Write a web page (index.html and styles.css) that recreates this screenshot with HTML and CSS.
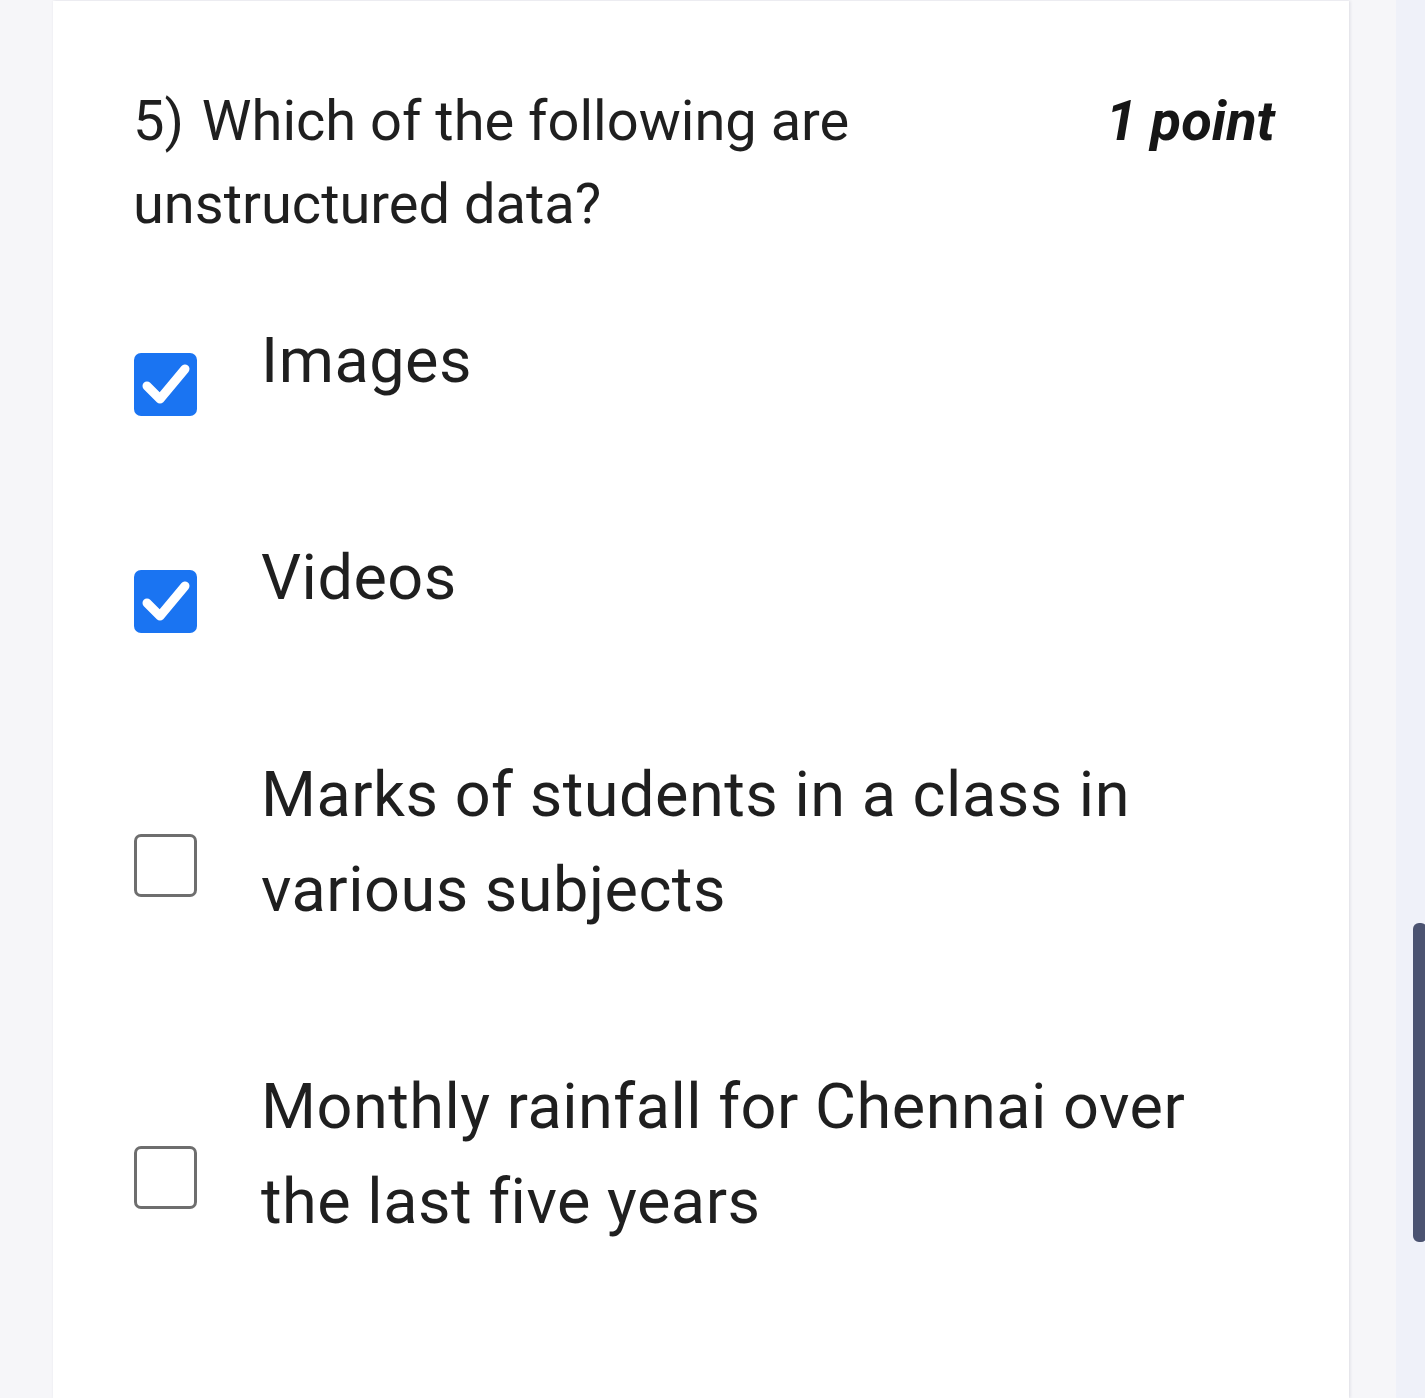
FILE: index.html
```html
<!DOCTYPE html>
<html lang="en">
<head>
    <meta charset="UTF-8">
    <meta name="viewport" content="width=device-width, initial-scale=1.0">
    <title>Quiz Question</title>
    <link rel="stylesheet" href="styles.css">
</head>
<body>
    <div class="page">
        <!-- 문제 카드 -->
        <div class="card">
            <div class="question-head">
                <div class="question-text"><span class="q-num">5)</span> Which of the following are unstructured data?</div>
                <div class="points">1 point</div>
            </div>

            <ul class="options">
                <li class="option">
                    <span class="box checked">
                        <svg viewBox="0 0 63 63" width="63" height="63"><polyline points="13,33 26,46 51,16" /></svg>
                    </span>
                    <span class="label">Images</span>
                </li>
                <li class="option">
                    <span class="box checked">
                        <svg viewBox="0 0 63 63" width="63" height="63"><polyline points="13,33 26,46 51,16" /></svg>
                    </span>
                    <span class="label">Videos</span>
                </li>
                <li class="option">
                    <span class="box"></span>
                    <span class="label">Marks of students in a class in various subjects</span>
                </li>
                <li class="option">
                    <span class="box"></span>
                    <span class="label">Monthly rainfall for Chennai over the last five years</span>
                </li>
            </ul>
        </div>

        <!-- 스크롤바 -->
        <div class="scroll-track">
            <div class="scroll-thumb"></div>
        </div>
    </div>
</body>
</html>
```

FILE: styles.css
```css
body {
    margin: 0;
    padding: 0;
    background: #f6f6f9;
    font-family: Roboto, "Liberation Sans", sans-serif;
    color: #1f1f1f;
    overflow: hidden;
}

.page {
    display: flex;
    height: 1398px;
    overflow: hidden;
}

/* 카드 */
.card {
    flex: none;
    width: 1296px;
    margin-left: 53px;
    margin-top: 1px;
    padding: 79px 74px 0 80px;
    box-sizing: border-box;
    background: #ffffff;
    box-shadow: 1px 0 3px rgba(40, 45, 70, 0.12);
}

.question-head {
    display: flex;
    justify-content: space-between;
    align-items: flex-start;
    gap: 40px;
}

.question-text {
    font-size: 56px;
    line-height: 83px;
}

.q-num {
    margin-right: 4px;
}

.points {
    font-size: 56px;
    line-height: 83px;
    font-weight: 700;
    font-style: italic;
    white-space: nowrap;
    color: #161616;
}

/* 보기 목록 */
.options {
    list-style: none;
    margin: 67px 0 0;
    padding: 0;
    display: flex;
    flex-direction: column;
    gap: 75px;
}

.option {
    display: flex;
    align-items: center;
    gap: 64px;
}

.box {
    flex: none;
    width: 63px;
    height: 63px;
    box-sizing: border-box;
    border: 3px solid #6e6e6e;
    border-radius: 7px;
    margin-left: 1px;
}

.box.checked {
    border: none;
    background: #1a74f2;
}

.box svg {
    display: block;
}

.box svg polyline {
    fill: none;
    stroke: #ffffff;
    stroke-width: 9;
    stroke-linecap: round;
    stroke-linejoin: round;
}

.label {
    flex: 1;
    font-size: 63px;
    line-height: 95px;
    letter-spacing: 0.5px;
    margin-bottom: 47px;
    padding-right: 30px;
}

/* 스크롤바 */
.scroll-track {
    flex: none;
    width: 29px;
    margin-left: 47px;
    background: #eff1f9;
}

.scroll-thumb {
    width: 14px;
    height: 319px;
    margin: 923px 0 0 17px;
    background: #4b5371;
    border-radius: 6px;
}
```
